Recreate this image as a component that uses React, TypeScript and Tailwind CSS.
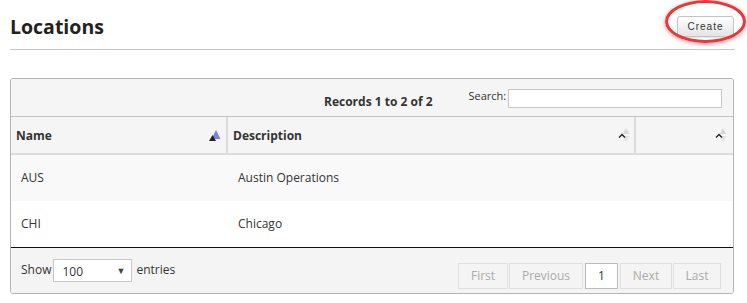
import React from "react";

const NameSort = () => (
  <svg width="13" height="13" viewBox="0 0 13 13" className="shrink-0">
    <polygon points="8,1 12.5,10 3.5,10" fill="#7f7fe0" />
    <polygon points="4.5,6 8,12 1,12" fill="#222" />
  </svg>
);

const BothSort = () => (
  <svg width="12" height="16" viewBox="0 0 12 16" className="shrink-0">
    <polygon points="8,1 11.5,7 4.5,7" fill="#d8d8d8" />
    <polygon points="8,15 11.5,9 4.5,9" fill="#e2e2e2" />
    <polyline points="1,10.5 4,7.5 7,10.5" fill="none" stroke="#222" strokeWidth="1.4" />
  </svg>
);

const rows = [
  { name: "AUS", desc: "Austin Operations" },
  { name: "CHI", desc: "Chicago" },
];

const pages = [
  { label: "First", w: "w-[50px]" },
  { label: "Previous", w: "w-[74px]" },
  { label: "1", w: "w-[33px]", active: true },
  { label: "Next", w: "w-[52px]" },
  { label: "Last", w: "w-[48px]" },
];

export default function App() {
  return (
    <div className="w-[747px] h-[303px] bg-white relative overflow-hidden font-['Open_Sans',sans-serif] text-[#333]">
      <div className="ml-[10px] w-[725px] h-[50px] border-b border-[#c6c6c6] flex items-center justify-between pt-[4px]">
        <h1 className="text-[19.5px] font-bold text-[#222]">Locations</h1>
        <div className="relative mr-[1px] mt-[-4px]">
          <button className="h-[21px] w-[57px] rounded-[3px] border border-[#c4c4c4] bg-gradient-to-b from-white to-[#e4e4e4] text-[10px] tracking-[1px] text-[#333] font-['Liberation_Sans',sans-serif] shadow-[0_1px_1px_rgba(0,0,0,0.1)]">
            Create
          </button>
          <div className="absolute left-[-12px] top-[-12px] w-[81px] h-[43px] rounded-[50%] border-[3px] border-[#e8363a] shadow-[0_1px_4px_rgba(160,0,0,0.45)] pointer-events-none" />
        </div>
      </div>

      <div className="ml-[10px] mt-[28px] w-[724px] border border-[#b4b4b4] rounded-[3px] overflow-hidden">
        <div className="h-[38px] bg-[#f5f5f5] border-b border-[#c2c2c2] flex items-center">
          <span className="ml-[313px] mt-[9px] text-[12px] font-bold text-[#333]">Records 1 to 2 of 2</span>
          <span className="ml-[36px] mt-[-3px] text-[11px] text-[#333]">Search:</span>
          <input className="ml-[2px] mt-[1px] w-[214px] h-[19px] bg-white border border-[#c8c8c8] outline-none" />
        </div>

        <div className="h-[38px] bg-[#f5f5f5] border-b-2 border-[#dcdcdc] grid grid-cols-[217px_408px_1fr] text-[12px] font-bold text-[#333]">
          <div className="flex items-center justify-between pl-[5px] pr-[5px] border-r-2 border-[#dcdcdc]">
            <span className="mt-[2px]">Name</span>
            <NameSort />
          </div>
          <div className="flex items-center justify-between pl-[5px] pr-[4px] border-r-2 border-[#dcdcdc]">
            <span className="mt-[2px]">Description</span>
            <BothSort />
          </div>
          <div className="flex items-center justify-end pr-[6px]">
            <BothSort />
          </div>
        </div>

        {rows.map((r, i) => (
          <div
            key={r.name}
            className={`h-[46px] grid grid-cols-[217px_408px_1fr] items-center text-[12px] text-[#333] ${i === 0 ? "bg-[#f9f9f9]" : "bg-white"}`}
          >
            <span className="pl-[10px]">{r.name}</span>
            <span className="pl-[10px]">{r.desc}</span>
            <span />
          </div>
        ))}

        <div className="border-t border-[#111] h-[46px] bg-[#f4f4f4] flex items-center justify-between">
          <div className="flex items-center pl-[10px] text-[12px] text-[#333]">
            <span className="mt-[-2px]">Show</span>
            <div className="ml-[2px] w-[79px] h-[23px] bg-white border border-[#c8c8c8] flex items-center justify-between pl-[8px] pr-[6px]">
              <span className="mt-[3px] text-[#334]">100</span>
              <span className="text-[9px] text-[#444]">▼</span>
            </div>
            <span className="ml-[4px] mt-[-2px]">entries</span>
          </div>
          <div className="flex gap-[1px] mr-[12px] mt-[10px] text-[12px]">
            {pages.map((p) => (
              <div
                key={p.label}
                className={`${p.w} h-[26px] flex items-center justify-center border ${p.active ? "border-[#bbb] bg-white text-[#333] ml-[1px] mr-[1px]" : "border-[#e0e0e0] bg-[#f4f4f4] text-[#aaa]"}`}
              >
                {p.label}
              </div>
            ))}
          </div>
        </div>
      </div>
    </div>
  );
}
